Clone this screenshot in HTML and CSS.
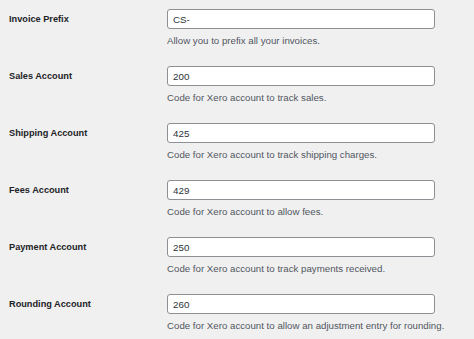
FILE: index.html
```html
<!DOCTYPE html>
<html lang="en">
<head>
    <meta charset="UTF-8">
    <meta name="viewport" content="width=device-width, initial-scale=1.0">
    <title>Xero Settings</title>
    <link rel="stylesheet" href="styles.css">
</head>
<body>
    <div class="form-table">
        <div class="form-row">
            <label class="form-label" for="invoice_prefix">Invoice Prefix</label>
            <div class="form-field">
                <input type="text" id="invoice_prefix" value="CS-">
                <p class="description">Allow you to prefix all your invoices.</p>
            </div>
        </div>
        <div class="form-row">
            <label class="form-label" for="sales_account">Sales Account</label>
            <div class="form-field">
                <input type="text" id="sales_account" value="200">
                <p class="description">Code for Xero account to track sales.</p>
            </div>
        </div>
        <div class="form-row">
            <label class="form-label" for="shipping_account">Shipping Account</label>
            <div class="form-field">
                <input type="text" id="shipping_account" value="425">
                <p class="description">Code for Xero account to track shipping charges.</p>
            </div>
        </div>
        <div class="form-row">
            <label class="form-label" for="fees_account">Fees Account</label>
            <div class="form-field">
                <input type="text" id="fees_account" value="429">
                <p class="description">Code for Xero account to allow fees.</p>
            </div>
        </div>
        <div class="form-row">
            <label class="form-label" for="payment_account">Payment Account</label>
            <div class="form-field">
                <input type="text" id="payment_account" value="250">
                <p class="description">Code for Xero account to track payments received.</p>
            </div>
        </div>
        <div class="form-row">
            <label class="form-label" for="rounding_account">Rounding Account</label>
            <div class="form-field">
                <input type="text" id="rounding_account" value="260">
                <p class="description">Code for Xero account to allow an adjustment entry for rounding.</p>
            </div>
        </div>
    </div>
</body>
</html>
```

FILE: styles.css
```css
body {
    margin: 0;
    background: #f0f0f1;
    font-family: 'Liberation Sans', Arial, sans-serif;
    color: #1d2327;
}

.form-table {
    display: flex;
    flex-direction: column;
}

.form-row {
    display: flex;
    padding: 9px 0 10px 9px;
}

.form-label {
    width: 158px;
    flex-shrink: 0;
    font-size: 9.2px;
    font-weight: bold;
    line-height: 20px;
}

.form-field {
    display: flex;
    flex-direction: column;
}

input {
    box-sizing: border-box;
    width: 268px;
    height: 20px;
    margin: 0;
    padding: 0 5px;
    border: 1px solid #8c8f94;
    border-radius: 3px;
    background: #fff;
    color: #2c3338;
    font-family: inherit;
    font-size: 9.8px;
    outline: none;
}

.description {
    margin: 5px 0 0;
    font-size: 9.7px;
    line-height: 13px;
    color: #50575e;
}
```
